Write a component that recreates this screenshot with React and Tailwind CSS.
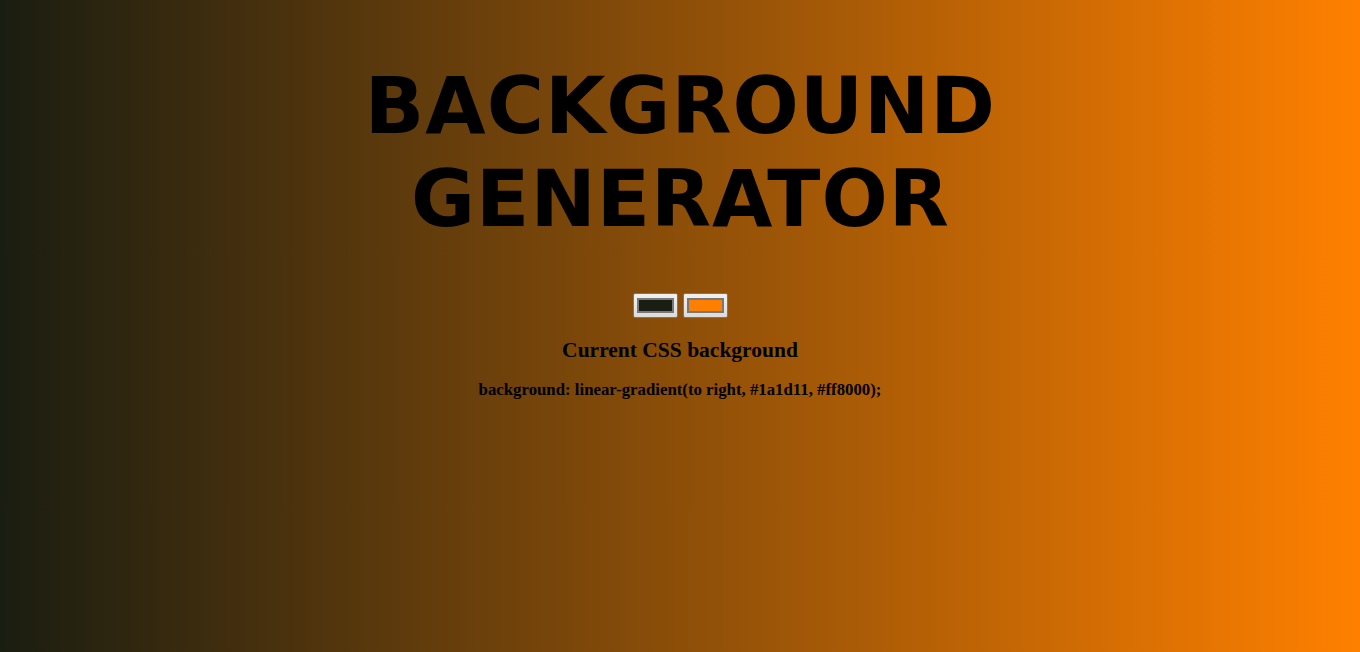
import React from 'react';

const Swatch = ({ color }) => (
  <div className="w-[45px] h-[25px] rounded-[2px] border border-[#767676] bg-gradient-to-b from-[#f0f0f0] to-[#dcdcdc] flex items-center justify-center">
    <div className="w-[37px] h-[15px] border-2 border-[#777777]" style={{ backgroundColor: color }} />
  </div>
);

export default function App() {
  const c1 = '#1a1d11';
  const c2 = '#ff8000';
  return (
    <div className="min-h-[652px] w-full bg-[linear-gradient(to_right,#1a1d11,#ff8000)] flex flex-col items-center text-black">
      <h1 className="mt-[60px] pl-[1px] text-[78px] leading-[93px] tracking-[1px] font-bold text-center font-['DejaVu_Sans',sans-serif]">
        BACKGROUND
        <br />
        GENERATOR
      </h1>
      <div className="mt-[47px] flex gap-[5px]">
        <Swatch color={c1} />
        <Swatch color={c2} />
      </div>
      <h3 className="mt-[16px] text-[21.5px] font-bold font-['Liberation_Serif',serif]">Current CSS background</h3>
      <p className="mt-[11px] text-[16.8px] font-bold font-['Liberation_Serif',serif]">
        background: linear-gradient(to right, {c1}, {c2});
      </p>
    </div>
  );
}
